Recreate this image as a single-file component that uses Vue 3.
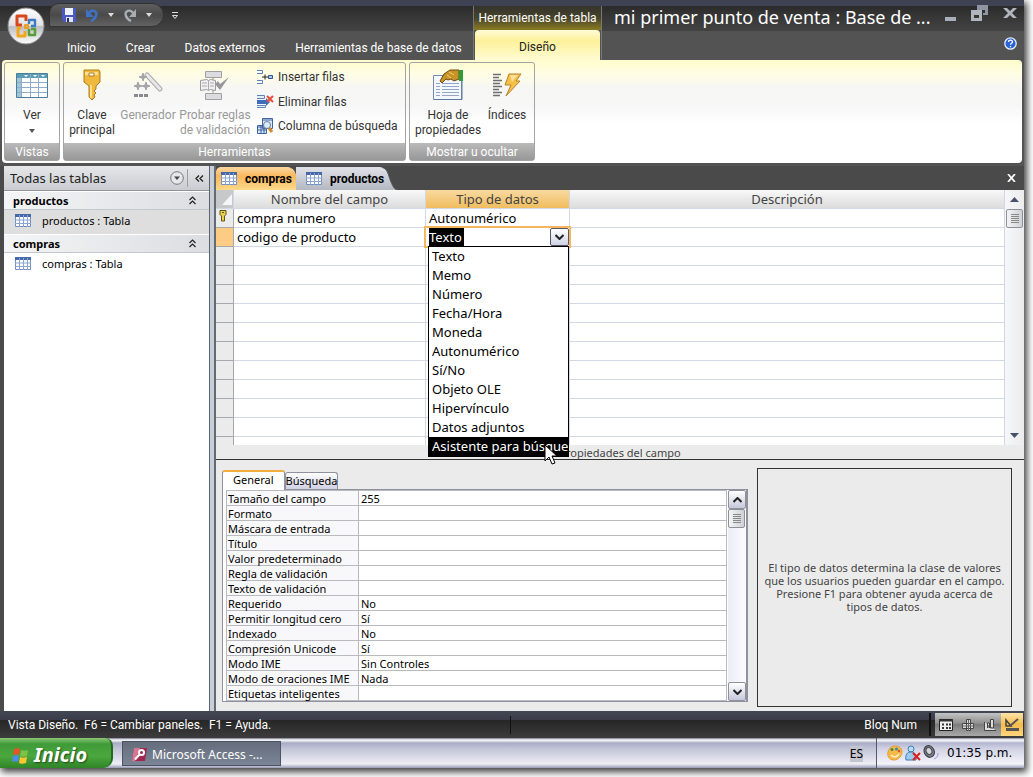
<script setup>
import { ref } from "vue";

const menuTabs = ["Inicio", "Crear", "Datos externos", "Herramientas de base de datos"];

const tableGroups = ["productos", "compras"];
const activeTable = ref("productos");

const dataTypes = [
  "Texto",
  "Memo",
  "Número",
  "Fecha/Hora",
  "Moneda",
  "Autonumérico",
  "Sí/No",
  "Objeto OLE",
  "Hipervínculo",
  "Datos adjuntos",
  "Asistente para búsqueda...",
];
const fieldType = ref("Texto");
const hovered = ref("Asistente para búsqueda...");
const showTypes = ref(true);

const emptyRows = 11;

const properties = ref([
  { id: "size", name: "Tamaño del campo", value: "255" },
  { id: "format", name: "Formato", value: "" },
  { id: "mask", name: "Máscara de entrada", value: "" },
  { id: "title", name: "Título", value: "" },
  { id: "default", name: "Valor predeterminado", value: "" },
  { id: "rule", name: "Regla de validación", value: "" },
  { id: "ruletext", name: "Texto de validación", value: "" },
  { id: "required", name: "Requerido", value: "No" },
  { id: "zero", name: "Permitir longitud cero", value: "Sí" },
  { id: "indexed", name: "Indexado", value: "No" },
  { id: "unicode", name: "Compresión Unicode", value: "Sí" },
  { id: "ime", name: "Modo IME", value: "Sin Controles" },
  { id: "imesent", name: "Modo de oraciones IME", value: "Nada" },
  { id: "tags", name: "Etiquetas inteligentes", value: "" },
]);

function pickType(type) {
  fieldType.value = type;
  showTypes.value = false;
}
</script>

<template>
  <div class="desktop">
    <div class="window">
      <!-- TITLE AND TABS -->
      <header class="top">
        <button class="office" aria-label="Botón de Office">
          <svg width="38" height="38" viewBox="0 0 38 38">
            <defs>
              <linearGradient id="orb" x1="0" y1="0" x2="0" y2="1">
                <stop offset="0" stop-color="#fff" />
                <stop offset=".48" stop-color="#e2e2e4" />
                <stop offset=".52" stop-color="#bcbdc2" />
                <stop offset="1" stop-color="#fff" />
              </linearGradient>
            </defs>
            <circle cx="19" cy="19" r="18" fill="url(#orb)" stroke="#8a8a8a" />
            <g fill="none" stroke-linejoin="round">
              <path d="M15 18h-5V9h9v5" stroke="#d8461c" stroke-width="3" />
              <path d="M22 17v-4h6v6h-4" stroke="#3c7cc4" stroke-width="2.400" />
              <path d="M14 21h-3v8h7v-5" stroke="#f2a51e" stroke-width="3" />
              <path d="M22 22v6h6v-6h-4" stroke="#5a9e3a" stroke-width="2.600" />
              <path d="M18 18v3h3v-3z" stroke="#e8a020" stroke-width="2" />
            </g>
          </svg>
        </button>

        <div class="left_top">
          <div class="quick">
            <div class="quick_bar">
              <button aria-label="Guardar">
                <svg width="14" height="14" viewBox="0 0 14 14">
                  <path d="M0 0h14v14H2l-2-2z" fill="#4a58c0" />
                  <path d="M3 0h8v7H3z" fill="#eef2ff" />
                  <path d="M4 9h7v5H4z" fill="#dfe4f6" />
                  <path d="M5 10h2v4H5z" fill="#202c70" />
                </svg>
              </button>
              <button aria-label="Deshacer">
                <svg width="14" height="14" viewBox="0 0 14 14">
                  <path d="M3 6C7 0 13 3 11 8c-1 3-3 4-5 5" fill="none" stroke="#3f73c8" stroke-width="2.400" />
                  <path d="M1 1v8h8z" fill="#3f73c8" />
                </svg>
              </button>
              <span class="caret"></span>
              <button aria-label="Rehacer">
                <svg width="14" height="14" viewBox="0 0 14 14">
                  <path d="M11 6C7 0 1 3 3 8c1 3 3 4 5 5" fill="none" stroke="#a9adb2" stroke-width="2.400" />
                  <path d="M13 1v8H6z" fill="#a9adb2" />
                </svg>
              </button>
              <span class="caret"></span>
            </div>
            <button class="customize" aria-label="Personalizar">
              <svg width="8" height="8" viewBox="0 0 8 8">
                <path d="M1 .5h6M1.500 3.500h5L4 6.500z" fill="none" stroke="#ddd" />
              </svg>
            </button>
          </div>
          <nav class="menu_tabs">
            <button v-for="tab in menuTabs" :key="tab">{{ tab }}</button>
          </nav>
        </div>

        <div class="context">
          <div class="context_title">Herramientas de tabla</div>
          <button class="context_tab">Diseño</button>
        </div>

        <div class="right_top">
          <div class="title_row">
            <h1 class="title">mi primer punto de venta : Base de ...</h1>
            <div class="controls">
              <button aria-label="Minimizar">
                <svg width="12" height="16" viewBox="0 0 12 16"><path d="M0 12h11v4H0z" fill="#a9afb8" /></svg>
              </button>
              <button aria-label="Restaurar">
                <svg width="18" height="16" viewBox="0 0 18 16">
                  <path d="M6 0h11v10h-5V8h2V5H6z" fill="#8f96a1" />
                  <path d="M0 5h11v11H0zM3 10v3h5v-3z" fill="#b0b5be" fill-rule="evenodd" />
                </svg>
              </button>
              <button aria-label="Cerrar">
                <svg width="14" height="16" viewBox="0 0 14 16">
                  <path d="M0 3h4l3 3 3-3h4L9 8l5 5h-4l-3-3-3 3H0l5-5z" fill="#b0b5be" />
                </svg>
              </button>
            </div>
          </div>
          <button class="help" aria-label="Ayuda">
            <svg width="13" height="13" viewBox="0 0 13 13">
              <circle cx="6.500" cy="6.500" r="5.700" fill="#2a62d8" stroke="#e6eefc" stroke-width="1.300" />
              <path d="M4.500 5c0-2.500 4-2.500 4 0 0 1.300-2 1.300-2 2.800M6.500 9v1.200" fill="none" stroke="#fff" stroke-width="1.300" />
            </svg>
          </button>
        </div>
      </header>

      <!-- RIBBON -->
      <section class="ribbon">
        <div class="group views">
          <div class="group_body">
            <button class="big">
              <svg width="32" height="32" viewBox="0 0 32 32">
                <path d="M.5 4.500h31v24H.5z" fill="#fff" stroke="#4a7f9c" />
                <path d="M1 5h30v4H1z" fill="#5b9db4" />
                <path d="M1 9h4v19H1z" fill="#9fc7d6" />
                <path d="M5.500 9v19M14.500 5v23M22.500 5v23M1 13.500h30M1 18.500h30M1 23.500h30" stroke="#8fabc8" />
                <path d="M8 6h4l-2 2zM17 6h4l-2 2zM25 6h4l-2 2z" fill="#fff" />
              </svg>
              <span>Ver</span>
              <span class="caret dark"></span>
            </button>
          </div>
          <div class="group_name">Vistas</div>
        </div>

        <div class="group tools">
          <div class="group_body">
            <button class="big key">
              <svg width="32" height="32" viewBox="0 0 32 32">
                <path d="M8 1h15l1 2v10l-4 4v3l-2 2 2 2-2 2 1 2-3 3-3-3V17l-5-4V3z" fill="#f0b83c" stroke="#b07a1c" />
                <path d="M9 3h13v3H9z" fill="#fbe08c" />
                <path d="M13 4h5v3h-5z" fill="#fff" stroke="#b07a1c" />
                <path d="M15 16v13" stroke="#fbe08c" stroke-width="2" />
              </svg>
              <span>Clave<br />principal</span>
            </button>
            <button class="big builder" disabled>
              <svg width="32" height="32" viewBox="0 0 32 32">
                <path d="M15 6l13 14" stroke="#a9a9ad" stroke-width="5" stroke-linecap="round" />
                <path d="M15 6l13 14" stroke="#e8e8ea" stroke-width="3" stroke-linecap="round" />
                <path d="M11 4l1 3 3 1-3 1-1 3-1-3-3-1 3-1zM6 13l1 3 3 1-3 1-1 3-1-3-3-1 3-1zM14 13l1 3 3 1-3 1-1 3-1-3-3-1 3-1z" fill="#a4a4a8" stroke="#a4a4a8" />
                <path d="M2 25h4v3H2zM7 25h4v3H7zM12 25h4v3h-4z" fill="#8a8a8e" />
              </svg>
              <span>Generador</span>
            </button>
            <button class="big rules" disabled>
              <svg width="32" height="32" viewBox="0 0 32 32">
                <path d="M14 8v16" stroke="#999" />
                <path d="M6.500 2.500h16v6h-16zM6.500 24.500h16v6h-16z" fill="#dcdce0" stroke="#a0a0a4" />
                <path d="M1.500 11.500l6-1 2 1 2-1 5 1v10l-5-1-2 1-2-1-6 1z" fill="#f0f0f2" stroke="#9a9aa0" />
                <path d="M9.500 11v10M3 14h5M3 17h5M11 14h4M11 17h4" stroke="#aaa" />
                <path d="M16 15l5 6 9-13-9 7-2-3z" fill="#98989c" />
              </svg>
              <span>Probar reglas<br />de validación</span>
            </button>
            <div class="small_list">
              <button>
                <svg width="17" height="16" viewBox="0 0 17 16">
                  <path d="M0 1.500h5.500v3H0M0 11.500h5.500v3H0" fill="#fff" stroke="#5c82b8" />
                  <path d="M5 8h6M8 5.500v5" stroke="#222" />
                  <path d="M11.500 6.500h4v3h-4z" fill="#a8c6ee" stroke="#34578c" />
                </svg>
                Insertar filas
              </button>
              <button>
                <svg width="17" height="16" viewBox="0 0 17 16">
                  <path d="M0 1.500h7.500v3H0M0 11.500h8.500v2H0" fill="#e4edf9" stroke="#5c82b8" />
                  <path d="M0 6h9V4l4 4-4 4v-2H0z" fill="#3d6db8" />
                  <path d="M10 2l6 6M16 2l-6 6" stroke="#e84c38" stroke-width="2" />
                </svg>
                Eliminar filas
              </button>
              <button>
                <svg width="17" height="16" viewBox="0 0 17 16">
                  <path d="M5.500.5h10v10h-10zM.5 7.500h9v8h-9z" fill="#dbe7f8" stroke="#3e64a0" />
                  <path d="M5 2h11M.5 9h9M4 8v8M7 8v8M0 12h10" stroke="#3e64a0" />
                  <circle cx="10" cy="7" r="3.500" fill="#d8ecfc" stroke="#6b7f9c" />
                  <path d="M12 10l3 4" stroke="#d08c2c" stroke-width="3" />
                </svg>
                Columna de búsqueda
              </button>
            </div>
          </div>
          <div class="group_name">Herramientas</div>
        </div>

        <div class="group show">
          <div class="group_body">
            <button class="big sheet">
              <svg width="32" height="32" viewBox="0 0 32 32">
                <path d="M1.500 6.500h28v24h-28z" fill="#f4f8fe" stroke="#7289b4" />
                <path d="M2 30.500h28V10" fill="none" stroke="#5f77a4" />
                <path d="M4 14.500h4M4 17.500h4M4 20.500h4M4 23.500h4M4 26.500h4M10 14.500h17M10 17.500h17M10 20.500h17M10 23.500h17M10 26.500h17" stroke="#92a6c8" />
                <path d="M8 12l4-7 6-4h9v9l-5 2-3-2-3 1-2-1-4 4z" fill="#c79428" stroke="#6e4c10" />
                <path d="M17 3l5 3M15 6l4 3" stroke="#f0cc6c" />
                <path d="M27 1h4v11h-4z" fill="#2f9c3c" />
              </svg>
              <span>Hoja de<br />propiedades</span>
            </button>
            <button class="big indexes">
              <svg width="32" height="32" viewBox="0 0 32 32">
                <path d="M2 5.500h8M2 8.500h6M2 11.500h9M2 14.500h7M2 17.500h9M2 20.500h6M2 23.500h9M2 26.500h7" stroke="#6e6e72" stroke-width="1.500" />
                <path d="M18 5h12l-5 7h4L15 27l5-11h-6z" fill="#f6bf48" stroke="#b8832a" />
                <path d="M19 6h8l-6 7z" fill="#fce09a" />
              </svg>
              <span>Índices</span>
            </button>
          </div>
          <div class="group_name">Mostrar u ocultar</div>
        </div>
      </section>

      <!-- CONTENT -->
      <main class="content">
        <aside class="nav_pane">
          <div class="nav_head">
            <span>Todas las tablas</span>
            <button class="nav_menu" aria-label="Elegir grupo">
              <svg width="14" height="14" viewBox="0 0 14 14">
                <circle cx="7" cy="7" r="6.300" fill="#e6e7ea" stroke="#777" />
                <path d="M4 5.500h6L7 9z" fill="#444" />
              </svg>
            </button>
            <button class="nav_close" aria-label="Cerrar panel">
              <svg width="9" height="7" viewBox="0 0 9 7">
                <path d="M4 .5l-3 3 3 3M8 .5l-3 3 3 3" fill="none" stroke="#222" stroke-width="1.300" />
              </svg>
            </button>
          </div>
          <template v-for="name in tableGroups" :key="name">
            <button class="nav_group">
              {{ name }}
              <svg width="7" height="9" viewBox="0 0 7 9">
                <path d="M.5 4l3-3 3 3M.5 8l3-3 3 3" fill="none" stroke="#222" stroke-width="1.200" />
              </svg>
            </button>
            <button class="nav_item" :class="{ active: name === activeTable }" @click="activeTable = name">
              <svg width="16" height="13" viewBox="0 0 16 13">
                <path d="M.5.500h15v12H.5z" fill="#fff" stroke="#6f8fc0" />
                <path d="M0 0h16v3H0z" fill="#4468a8" />
                <path d="M4.500 1v12M8.500 1v12M12.500 1v12M0 6h16M0 9.500h16" stroke="#8aa6d0" />
              </svg>
              {{ name }} : Tabla
            </button>
          </template>
        </aside>

        <section class="document">
          <div class="doc_tabs">
            <button v-for="(name, i) in ['compras', 'productos']" :key="name" class="doc_tab" :class="{ current: i === 0 }">
              <span class="doc_label">
                <svg width="16" height="13" viewBox="0 0 16 13">
                  <path d="M.5.500h15v12H.5z" fill="#fff" stroke="#6f8fc0" />
                  <path d="M0 0h16v3H0z" fill="#4468a8" />
                  <path d="M4.500 1v12M8.500 1v12M12.500 1v12M0 6h16M0 9.500h16" stroke="#8aa6d0" />
                </svg>
                {{ name }}
              </span>
              <svg class="doc_end" width="20" height="23" viewBox="0 0 20 23">
                <defs>
                  <linearGradient id="tabOn" x1="0" y1="0" x2="0" y2="1">
                    <stop offset="0" stop-color="#fcd9a4" />
                    <stop offset=".4" stop-color="#fbb75c" />
                    <stop offset="1" stop-color="#fdd98a" />
                  </linearGradient>
                  <linearGradient id="tabOff" x1="0" y1="0" x2="0" y2="1">
                    <stop offset="0" stop-color="#e0e2e7" />
                    <stop offset="1" stop-color="#b4b8c2" />
                  </linearGradient>
                </defs>
                <path d="M0 0C10 0 10 8 13 15 15 20 17 23 20 23H0z" :fill="i === 0 ? 'url(#tabOn)' : 'url(#tabOff)'" />
                <path d="M4 .5C10 1 10 8 13 15 15 20 17 23 20 23" fill="none" stroke="#5a5a5a" />
              </svg>
            </button>
            <button class="doc_close" aria-label="Cerrar tabla">
              <svg width="9" height="8" viewBox="0 0 9 8">
                <path d="M1 0l7 8M8 0L1 8" stroke="#fff" stroke-width="1.800" />
              </svg>
            </button>
          </div>

          <div class="fields">
            <table class="field_table">
              <colgroup>
                <col class="c_sel" />
                <col class="c_name" />
                <col class="c_type" />
                <col />
              </colgroup>
              <thead>
                <tr>
                  <th class="corner">
                    <svg width="10" height="11" viewBox="0 0 10 11"><path d="M10 0v11H0z" fill="#f6f6f6" /></svg>
                  </th>
                  <th>Nombre del campo</th>
                  <th class="selected">Tipo de datos</th>
                  <th>Descripción</th>
                </tr>
              </thead>
              <tbody>
                <tr>
                  <td class="sel">
                    <svg width="8" height="12" viewBox="0 0 8 12">
                      <path d="M1 .5h6v4L5.500 6v5h-3V6L1 4.500z" fill="#e8d048" stroke="#5e5418" />
                      <path d="M3 2.500h2" stroke="#5e5418" />
                    </svg>
                  </td>
                  <td>compra numero</td>
                  <td>Autonumérico</td>
                  <td></td>
                </tr>
                <tr>
                  <td class="sel now"></td>
                  <td>codigo de producto</td>
                  <td class="editing">
                    <div class="combo">
                      <select v-model="fieldType" aria-label="Tipo de datos" @mousedown.prevent="showTypes = !showTypes">
                        <option v-for="type in dataTypes" :key="type">{{ type }}</option>
                      </select>
                      <span class="combo_arrow">
                        <svg width="9" height="6" viewBox="0 0 9 6">
                          <path d="M.5 1l4 4 4-4" fill="none" stroke="#222" stroke-width="2" />
                        </svg>
                      </span>
                      <ul v-if="showTypes" class="type_list" role="listbox" aria-label="Tipos">
                        <li
                          v-for="type in dataTypes"
                          :key="type"
                          role="option"
                          :class="{ hovered: type === hovered }"
                          @mouseenter="hovered = type"
                          @click="pickType(type)"
                        >
                          {{ type }}
                        </li>
                      </ul>
                      <svg v-if="showTypes" class="pointer" width="13" height="21" viewBox="0 0 13 21">
                        <path d="M1 1v16l4-4 3 7 3-1-3-7h5z" fill="#fff" stroke="#000" />
                      </svg>
                    </div>
                  </td>
                  <td></td>
                </tr>
                <tr v-for="n in emptyRows" :key="n">
                  <td class="sel"></td>
                  <td></td>
                  <td></td>
                  <td></td>
                </tr>
              </tbody>
            </table>
            <div class="scroll">
              <button aria-label="Subir">
                <svg width="9" height="5" viewBox="0 0 9 5"><path d="M4.500 0L9 5H0z" fill="#47506e" /></svg>
              </button>
              <div class="thumb"></div>
              <button class="down" aria-label="Bajar">
                <svg width="9" height="5" viewBox="0 0 9 5"><path d="M0 0h9L4.500 5z" fill="#47506e" /></svg>
              </button>
            </div>
          </div>

          <div class="props_title">Propiedades del campo</div>

          <div class="props">
            <div class="props_left">
              <div class="props_tabs">
                <button class="on">General</button>
                <button>Búsqueda</button>
              </div>
              <div class="props_box">
                <table class="props_table">
                  <tbody>
                    <tr v-for="prop in properties" :key="prop.id">
                      <th><label :for="prop.id">{{ prop.name }}</label></th>
                      <td><input :id="prop.id" v-model="prop.value" type="text" /></td>
                    </tr>
                  </tbody>
                </table>
                <div class="props_scroll">
                  <button aria-label="Subir propiedades">
                    <svg width="9" height="6" viewBox="0 0 9 6">
                      <path d="M.5 5l4-4 4 4" fill="none" stroke="#222" stroke-width="2" />
                    </svg>
                  </button>
                  <div class="thumb"></div>
                  <button class="down" aria-label="Bajar propiedades">
                    <svg width="9" height="6" viewBox="0 0 9 6">
                      <path d="M.5 1l4 4 4-4" fill="none" stroke="#222" stroke-width="2" />
                    </svg>
                  </button>
                </div>
              </div>
            </div>
            <div class="hint">
              <p>
                El tipo de datos determina la clase de valores que los usuarios pueden guardar en el campo. Presione F1
                para obtener ayuda acerca de tipos de datos.
              </p>
            </div>
          </div>
        </section>
      </main>

      <!-- STATUS BAR -->
      <div class="status">
        <span class="status_text">Vista Diseño.&nbsp; F6 = Cambiar paneles.&nbsp; F1 = Ayuda.</span>
        <span class="status_lock">Bloq Num</span>
        <div class="view_buttons">
          <button aria-label="Vista Hoja de datos">
            <svg width="14" height="12" viewBox="0 0 14 12">
              <path d="M.5.500h13v11H.5z" fill="#eee" stroke="#222" />
              <path d="M0 1.500h14" stroke="#333" stroke-width="2" />
              <path d="M3 4.500h2v2H3zM3 8h2v2H3zM7 4.500h2v2H7zM10 4.500h2v2h-2zM7 8h2v2H7zM10 8h2v2h-2z" fill="#333" />
            </svg>
          </button>
          <button aria-label="Vista Tabla dinámica">
            <svg width="14" height="14" viewBox="0 0 14 14">
              <path d="M5.500 1.500h4v11h-4zM1.500 5.500h11v5h-11z" fill="#ddd" stroke="#444" />
              <path d="M7.500 2v11M1 8h12" stroke="#666" />
            </svg>
          </button>
          <button aria-label="Vista Gráfico dinámico">
            <svg width="14" height="14" viewBox="0 0 14 14">
              <path d="M1.500 4v8.500H13M4.500 10V5h2v5M7.500 10V1.500h3V10z" fill="#ddd" stroke="#444" />
            </svg>
          </button>
          <button class="on" aria-label="Vista Diseño">
            <svg width="15" height="14" viewBox="0 0 15 14">
              <path d="M1 2v6h5z" fill="none" stroke="#444" stroke-width="1.500" />
              <path d="M5 8l8-7" stroke="#555" stroke-width="2" />
              <path d="M1 10h13v3H1z" fill="#555" />
            </svg>
          </button>
        </div>
      </div>

      <!-- TASKBAR -->
      <footer class="taskbar">
        <button class="start">
          <svg width="18" height="17" viewBox="0 0 18 17">
            <path d="M3 2c2-1 4-1 6 0L8 8c-2-1-4-1-6 0z" fill="#e8532a" />
            <path d="M10 3c2 1 4 1 7 0l-1 6c-3 1-5 1-7 0z" fill="#7cc244" />
            <path d="M2 9c2-1 4-1 6 0l-1 6c-2-1-4-1-6 0z" fill="#4f8ce8" />
            <path d="M9 10c2 1 4 1 7 0l-1 6c-3 1-5 1-7 0z" fill="#f8c830" />
          </svg>
          Inicio
        </button>
        <button class="task">
          <svg width="16" height="15" viewBox="0 0 16 15">
            <path d="M2 1h13l-2 13H0z" fill="#a02850" />
            <path d="M2 1h6L3 14H0z" fill="#d87890" />
            <circle cx="9.500" cy="5.500" r="2.500" fill="none" stroke="#fff" stroke-width="2" />
            <path d="M7.500 7.500L3 12.500" stroke="#fff" stroke-width="2" />
          </svg>
          Microsoft Access -...
        </button>
        <span class="lang">ES</span>
        <div class="tray">
          <svg width="16" height="16" viewBox="0 0 16 16">
            <path d="M8 1c5 0 7 3 7 6s-3 8-8 8-7-4-6-8 4-6 7-6z" fill="#f8b848" stroke="#e09c38" />
            <circle cx="5" cy="4.500" r="1.500" fill="#3c8c3c" />
            <circle cx="9.500" cy="4" r="1.500" fill="#2f8fa8" />
            <circle cx="12" cy="6" r="1.200" fill="#e04c30" />
            <path d="M4 10c3 3 6 2 8-1" fill="none" stroke="#fff2c8" stroke-width="1.500" />
          </svg>
          <svg width="16" height="16" viewBox="0 0 16 16">
            <circle cx="6" cy="4" r="3" fill="#b8dcf4" stroke="#3a7cb4" />
            <path d="M1 15c-1-5 1-8 5-8s6 3 5 8z" fill="#9ccaec" stroke="#3a7cb4" />
            <path d="M8 8l7 7M15 8l-7 7" stroke="#d8201c" stroke-width="2" />
          </svg>
          <svg width="16" height="16" viewBox="0 0 16 16">
            <ellipse cx="6" cy="6.500" rx="5" ry="6" fill="#7c8088" stroke="#34363c" transform="rotate(-25 6 6)" />
            <ellipse cx="6" cy="6" rx="2.800" ry="3.500" fill="#d4d6da" stroke="#44464c" transform="rotate(-25 6 6)" />
            <path d="M11 14c3-1 4-3 4-6" fill="none" stroke="#98a0e0" />
          </svg>
          <span class="clock">01:35 p.m.</span>
        </div>
      </footer>
    </div>
  </div>
</template>

<style>
body {
  margin: 0;
  background: #fff;
}
</style>

<style scoped>
* {
  box-sizing: border-box;
}

.desktop {
  height: 100vh;
  padding: 0 9px 9px 0;
  overflow: hidden;
  font-family: "Noto Sans", "Open Sans", sans-serif;
  font-size: 12px;
}

button {
  border: none;
  background: none;
  padding: 0;
  margin: 0;
  font: inherit;
  color: inherit;
  white-space: nowrap;
}

svg {
  display: block;
  flex: none;
}

.window {
  height: 100%;
  display: flex;
  flex-direction: column;
  background: #535353;
  box-shadow: 2px 3px 7px 1px rgba(0, 0, 0, 0.75);
}

.menu_tabs,
.context,
.ribbon,
.doc_tabs,
.status {
  font-family: Roboto, "Noto Sans", sans-serif;
}

/* TITLE AND TABS */
.top {
  position: relative;
  flex: none;
  height: 60px;
  display: grid;
  grid-template-columns: 473px 129px 1fr;
  color: #fff;
  background: linear-gradient(#3e4252 0, #3e4252 6px, #2a2a2a 6px, #343434 14px, #434343 31px, #535353 31px);
}

.office {
  position: absolute;
  left: 7px;
  top: 7px;
}

.quick {
  height: 31px;
  display: flex;
  align-items: flex-start;
  padding: 3px 0 0 49px;
}

.quick_bar {
  height: 24px;
  width: 115px;
  padding: 0 11px 0 12px;
  display: flex;
  align-items: center;
  justify-content: space-between;
  background: linear-gradient(#5e5e5e, #4a4a4a 50%, #626262);
  border: 1px solid #333;
  border-radius: 10px 12px 12px 2px;
}

.caret {
  width: 6px;
  height: 4px;
  background: #ddd;
  clip-path: polygon(0 0, 100% 0, 50% 100%);
}

.caret.dark {
  background: #555;
  margin-top: 6px;
}

.customize {
  margin: 9px 0 0 7px;
}

.menu_tabs {
  display: flex;
  height: 29px;
  padding-left: 52px;
}

.menu_tabs button {
  padding: 4px 15px 0;
}

.context {
  margin-top: 6px;
  background: linear-gradient(#35342c, #47432a 12px, #8a7c22 24px, #535353 24px);
  border-left: 1px solid #777;
  border-right: 1px solid #777;
}

.context_title {
  height: 24px;
  line-height: 24px;
  text-align: center;
  white-space: nowrap;
}

.context_tab {
  display: block;
  width: 125px;
  height: 30px;
  margin-left: 1px;
  padding-top: 4px;
  color: #222;
  background: linear-gradient(#fffbd8, #fdf19a 35%, #fffbd2);
  border-radius: 4px 4px 0 0;
}

.title_row {
  height: 31px;
  display: flex;
  justify-content: space-between;
  padding: 5px 7px 0 12px;
}

.title {
  margin: 0;
  font-size: 18px;
  line-height: 24px;
  font-weight: normal;
  white-space: nowrap;
}

.controls {
  display: flex;
  gap: 14px;
}

.controls button {
  height: 16px;
}

.help {
  display: block;
  margin: 6px 7px 0 auto;
}

/* RIBBON */
.ribbon {
  flex: none;
  height: 103px;
  margin: 0 2px 3px;
  padding: 2px;
  display: flex;
  gap: 3px;
  background: linear-gradient(#fffccc, #fffde6 15px, #f6f6f4 28px, #f7f7f7 45px, #fff 65px);
  border-radius: 4px;
  color: #333;
}

.group {
  border: 1px solid #a4a4a4;
  border-radius: 3px;
  display: flex;
  flex-direction: column;
}

.views {
  width: 56px;
}

.tools {
  width: 343px;
}

.show {
  width: 126px;
}

.group_body {
  flex: 1;
  min-height: 0;
  display: flex;
  padding-top: 6px;
}

.group_name {
  flex: none;
  height: 17px;
  line-height: 18px;
  text-align: center;
  color: #fff;
  background: linear-gradient(#bababa, #979797);
}

.big {
  flex: none;
  width: 54px;
  display: flex;
  flex-direction: column;
  align-items: center;
  line-height: 15px;
}

.big span:not(.caret) {
  margin-top: 7px;
}

.big:disabled {
  color: #999;
}

.key,
.builder {
  width: 56px;
}

.rules {
  width: 78px;
}

.sheet {
  width: 76px;
}

.indexes {
  width: 42px;
}

.small_list {
  display: flex;
  flex-direction: column;
  margin-left: 3px;
}

.small_list button {
  height: 25px;
  display: flex;
  align-items: flex-start;
  gap: 4px;
  line-height: 16px;
}

/* CONTENT */
.content {
  flex: 1;
  min-height: 0;
  display: flex;
  padding-left: 4px;
  background: #4a4a4a;
}

.nav_pane {
  flex: none;
  width: 206px;
  border-right: 1px solid #5b6270;
  background: #fff;
}

.nav_head {
  height: 25px;
  display: flex;
  align-items: center;
  padding-left: 6px;
  font-size: 13px;
  color: #222;
  background: linear-gradient(#e6e7e9, #c9ccd1);
  border-bottom: 1px solid #8d929b;
}

.nav_menu {
  margin-left: auto;
}

.nav_close {
  height: 18px;
  margin-left: 3px;
  padding: 0 5px 0 7px;
  border-left: 1px solid #9a9ea6;
}

.nav_group {
  width: 100%;
  height: 18px;
  margin-top: 1px;
  padding: 0 13px 0 9px;
  display: flex;
  align-items: center;
  justify-content: space-between;
  font-size: 11px;
  font-weight: bold;
  background: linear-gradient(to right, #f4f5f6, #dbdde1);
  border-bottom: 1px solid #c3c8cf;
}

.nav_item {
  width: 100%;
  height: 24px;
  padding: 0 11px 4px;
  display: flex;
  align-items: center;
  gap: 11px;
  font-size: 11px;
}

.nav_item.active {
  background: #dedede;
}

.document {
  flex: 1;
  min-width: 0;
  display: flex;
  flex-direction: column;
  margin-left: 4px;
  border-left: 2px solid #626a76;
  box-shadow: -4px 0 #c8cdd6;
}

.doc_tabs {
  flex: none;
  height: 24px;
  display: flex;
}

.doc_tab {
  display: flex;
  margin-left: -10px;
  padding-top: 1px;
  font-size: 12px;
  font-weight: bold;
}

.doc_tab.current {
  margin-left: 0;
  position: relative;
  z-index: 1;
}

/* the last 6px of the label run over the curved end */
.doc_label {
  position: relative;
  z-index: 1;
  display: flex;
  align-items: center;
  gap: 8px;
  height: 23px;
  padding-left: 10px;
  background: linear-gradient(#e0e2e7, #b4b8c2) 0 0 / calc(100% - 6px) 100% no-repeat;
}

.doc_tab.current .doc_label {
  padding-left: 5px;
  background: linear-gradient(#fcd9a4, #fbb75c 40%, #fdd98a) 0 0 / calc(100% - 6px) 100% no-repeat;
  border-radius: 5px 0 0 0;
}

.doc_end {
  margin-left: -6px;
}

.doc_close {
  margin: 0 8px 0 auto;
}

.fields {
  flex: 1;
  min-height: 0;
  display: flex;
  background: #fff;
}

.field_table {
  flex: 1;
  min-width: 0;
  table-layout: fixed;
  border-collapse: separate;
  border-spacing: 0;
  align-self: flex-start;
  font-size: 13px;
  background: #fff;
}

.c_sel {
  width: 18px;
}

.c_name {
  width: 192px;
}

.c_type {
  width: 144px;
}

.field_table th,
.field_table td {
  height: 19px;
  line-height: 18px;
  border-right: 1px solid #d0d7e5;
  border-bottom: 1px solid #d0d7e5;
  white-space: nowrap;
}

.field_table th {
  padding: 0;
  font-weight: normal;
  color: #444;
  background: linear-gradient(#f8f8f8, #dcdcdc);
}

.field_table th.selected {
  background: linear-gradient(#f8d9a0, #f0bd5e);
}

.field_table th.corner {
  background: #c6c8ca;
}

.corner svg {
  margin-left: 6px;
}

.field_table td {
  padding: 0 3px;
}

.field_table .sel {
  background: #ebebeb;
  border-color: #a5a8ad;
}

.sel svg {
  margin-top: -4px;
}

.field_table .now {
  background: #fccb84;
}

.field_table td.editing {
  padding: 0;
}

.combo {
  position: relative;
  height: 18px;
  outline: 2px solid #f3b760;
}

.combo select {
  appearance: none;
  display: block;
  width: 100%;
  height: 18px;
  padding: 0 0 0 3px;
  border: none;
  border-radius: 0;
  outline: none;
  font: inherit;
  line-height: 18px;
  color: #fff;
  background: linear-gradient(#000, #000) 3px 0 / 35px 18px no-repeat #fff;
}

.combo_arrow {
  position: absolute;
  right: 0;
  top: 0;
  width: 19px;
  height: 18px;
  display: flex;
  align-items: center;
  justify-content: center;
  background: linear-gradient(#fff, #cfd2e6);
  border: 1px solid #55586a;
  border-radius: 2px;
  pointer-events: none;
}

.type_list {
  position: absolute;
  z-index: 5;
  left: 2px;
  top: 18px;
  width: 141px;
  margin: 0;
  padding: 0;
  list-style: none;
  background: #fff;
  border: 1px solid #000;
}

.type_list li {
  height: 19px;
  line-height: 19px;
  padding-left: 3px;
  overflow: hidden;
}

.type_list .hovered {
  color: #fff;
  background: #000;
}

.pointer {
  position: absolute;
  z-index: 6;
  left: 118px;
  top: 216px;
}

.scroll {
  flex: none;
  width: 19px;
  display: flex;
  flex-direction: column;
  align-items: center;
  background: linear-gradient(to right, #f6f7fa, #ececec);
}

.scroll button {
  height: 19px;
}

.thumb {
  width: 17px;
  height: 19px;
  border: 1px solid #8d9097;
  border-radius: 2px;
  background:
    repeating-linear-gradient(#888 0 1px, transparent 1px 2px) center / 8px 9px no-repeat,
    linear-gradient(to right, #f4f4f4, #cfd1d6);
}

.down {
  margin-top: auto;
}

/* FIELD PROPERTIES */
.props_title {
  position: relative;
  flex: none;
  height: 15px;
  line-height: 15px;
  font-size: 11px;
  text-align: center;
  color: #444;
  background: #ebebeb;
  border-bottom: 1px solid #333;
}

.props {
  position: relative;
  flex: none;
  height: 251px;
  display: flex;
  gap: 9px;
  padding: 8px 12px 4px 6px;
  background: #ebebeb;
  font-size: 11px;
}

.props_left {
  flex: 2;
  min-width: 0;
  padding: 2px 0 5px;
  display: flex;
  flex-direction: column;
}

.props_tabs {
  display: flex;
  align-items: flex-end;
  height: 19px;
}

.props_tabs button {
  height: 17px;
  padding: 0;
  line-height: 16px;
  border: 1px solid #8f929c;
  border-bottom: none;
  border-radius: 3px 3px 0 0;
  background: linear-gradient(#fff, #cfd0e4);
}

.props_tabs .on {
  position: relative;
  height: 20px;
  margin-bottom: -1px;
  padding: 0 10px 3px;
  background: #fff;
  border-top: 2px solid #f2ad3c;
}

.props_box {
  flex: 1;
  display: flex;
  gap: 1px;
  padding: 0 0 0 3px;
  background: #fff;
  border: 1px solid #8f929c;
  border-right-width: 2px;
}

.props_table {
  flex: 1;
  min-width: 0;
  table-layout: fixed;
  border-collapse: collapse;
  align-self: flex-start;
}

.props_table th,
.props_table td {
  height: 15px;
  padding: 0 1px;
  line-height: 13px;
  border: 1px solid #b9bac0;
}

.props_table th {
  width: 132px;
  font-weight: normal;
  text-align: left;
  white-space: nowrap;
  background: #f8f8fa;
}

.props_table label {
  display: block;
}

.props_table input {
  display: block;
  width: 100%;
  height: 13px;
  padding: 0 1px;
  border: none;
  outline: none;
  font: inherit;
  background: none;
}

.props_scroll {
  width: 18px;
  display: flex;
  flex-direction: column;
  background: linear-gradient(to right, #ececf6, #fbfbff);
}

.props_scroll button {
  width: 18px;
  height: 19px;
  display: flex;
  align-items: center;
  justify-content: center;
  border: 1px solid #8f929c;
  border-radius: 2px;
  background: linear-gradient(#fff, #c6c9dc);
}

.hint {
  flex: 1;
  min-width: 0;
  max-width: 255px;
  padding: 0 5px 2px;
  display: flex;
  align-items: center;
  justify-content: center;
  text-align: center;
  line-height: 13px;
  color: #444;
  border: 1px solid #333;
}

.hint p {
  margin: 0;
}

/* STATUS BAR */
.status {
  flex: none;
  height: 27px;
  display: flex;
  align-items: center;
  padding-left: 8px;
  color: #fff;
  background: linear-gradient(#434754, #3a3d48 9px, #262626 9px, #3c3c3c);
}

.status_text {
  width: 503px;
  line-height: 18px;
  border-right: 1px solid #111;
}

.status_lock {
  margin-left: auto;
}

.view_buttons {
  height: 23px;
  display: flex;
  margin: 0 1px 0 12px;
  padding-left: 4px;
  border-left: 2px solid #111;
}

.view_buttons button {
  width: 22px;
  display: flex;
  align-items: center;
  justify-content: center;
  background: linear-gradient(#c4c4c4, #8f8f8f 45%, #7c7c7c 50%, #a8a8a8);
}

.view_buttons .on {
  background: linear-gradient(#fde3a8, #f6bb4e 50%, #fdd67c);
}

/* TASKBAR */
.taskbar {
  flex: none;
  height: 30px;
  display: flex;
  background: linear-gradient(#75778c, #fff 2px, #a9abc6 5px, #c3c5d8 11px, #eeeef5 26px, #9799b4);
}

.start {
  width: 113px;
  display: flex;
  align-items: center;
  gap: 5px;
  padding: 4px 0 0 11px;
  font-size: 20px;
  line-height: 24px;
  font-weight: bold;
  font-style: italic;
  color: #fff;
  text-shadow: 1px 1px 2px #1c4a16;
  background: linear-gradient(#8cc878, #3f9a38 6px, #4ba83e 60%, #2f8428);
  border-right: 2px solid #226a1e;
  border-radius: 0 8px 10px 0;
}

.task {
  width: 159px;
  height: 25px;
  margin: 3px 0 0 9px;
  padding: 2px 0 0 9px;
  display: flex;
  align-items: center;
  gap: 4px;
  font-size: 12px;
  color: #fff;
  background: linear-gradient(#656d7d, #7b8595);
  border: 1px solid #4c5362;
}

.lang {
  margin: 8px 13px 0 auto;
  height: 16px;
  line-height: 16px;
  background: #c2c4ce;
}

.tray {
  width: 148px;
  display: flex;
  align-items: center;
  gap: 2px;
  padding-left: 10px;
  border-left: 1px solid #55576c;
  background: linear-gradient(#85879e, #fff 2px, #b4b6d0 5px, #d2d4e6 11px, #f4f4fa 26px, #9c9eb8);
}

.clock {
  margin-left: 6px;
  font-family: "DejaVu Sans", sans-serif;
  font-size: 12px;
  white-space: nowrap;
}
</style>
